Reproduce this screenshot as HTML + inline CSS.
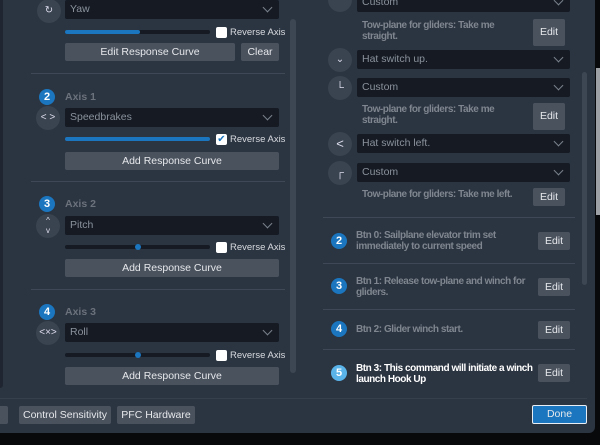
<!DOCTYPE html>
<html><head><meta charset="utf-8"><style>
*{margin:0;padding:0;box-sizing:border-box}
body{width:600px;height:445px;background:#07090b;overflow:hidden;position:relative;font-family:"Liberation Sans",sans-serif}
.a{position:absolute}
.panel{left:0;top:0;width:595px;height:433px;background:#2b3441;border-radius:0 0 6px 0}
.dd{position:absolute;background:#151a23;border-radius:2px;color:#8b929b;font-size:10.5px;line-height:19px;padding-left:5px;height:19px}
.dd:after{content:"";position:absolute;right:8px;top:4px;width:6px;height:6px;border-right:1px solid #7a818a;border-bottom:1px solid #7a818a;transform:rotate(45deg)}
.btn{position:absolute;background:#4a525e;border-radius:2px;color:#e6e8eb;font-size:10.5px;text-align:center;line-height:18px;height:18px}
.ic{position:absolute;width:24px;height:24px;border-radius:50%;background:#3a4350;color:#dde;font-size:10px;text-align:center;line-height:24px}
.bd{position:absolute;width:16px;height:16px;border-radius:50%;background:#1b76bf;color:#fff;font-size:11px;font-weight:bold;text-align:center;line-height:16px}
.lbl{position:absolute;color:#6b727c;font-size:10.5px;font-weight:bold}
.trk{position:absolute;height:4px;background:#151a23;border-radius:2px}
.cb{position:absolute;width:11px;height:11px;background:#fff;border-radius:2px}
.ra{position:absolute;color:#d8dbe0;font-size:9.5px}
.hr{position:absolute;height:1px;background:#3e4856}
.tx{position:absolute;color:#7f868f;font-size:10px;font-weight:bold;line-height:11px;letter-spacing:-0.45px}
</style></head><body>
<div class="a panel"></div>
<div class="a" style="left:596px;top:68px;width:4px;height:147px;background:#9da1a6"></div>
<div class="a" style="left:0;top:0;width:3px;height:388px;background:#1f2631;border-radius:0 0 3px 0"></div>
<div class="a" style="left:290px;top:19px;width:6px;height:354px;background:#3d4653;border-radius:3px"></div>

<!-- Yaw -->
<div class="ic" style="left:37px;top:-1px">↻</div>
<div class="dd" style="left:65px;top:0;width:214px">Yaw</div>
<div class="trk" style="left:65px;top:30px;width:145px"></div>
<div class="a" style="left:65px;top:30px;width:75px;height:4px;background:#1b76bf;border-radius:2px"></div>
<div class="cb" style="left:216px;top:27px"></div><div class="ra" style="left:230px;top:27px">Reverse Axis</div>
<div class="btn" style="left:65px;top:43px;width:170px">Edit Response Curve</div>
<div class="btn" style="left:241px;top:43px;width:38px">Clear</div>
<div class="hr" style="left:31px;top:73px;width:254px"></div>

<!-- Axis1 -->
<div class="bd" style="left:39px;top:89px">2</div><div class="lbl" style="left:65px;top:91px">Axis 1</div>
<div class="ic" style="left:36px;top:106px">&lt; &gt;</div>
<div class="dd" style="left:65px;top:108px;width:214px">Speedbrakes</div>
<div class="a" style="left:65px;top:137px;width:145px;height:4px;background:#1b76bf;border-radius:2px"></div>
<div class="cb" style="left:216px;top:134px;color:#1b76bf;font-size:10px;line-height:11px;text-align:center">✔</div><div class="ra" style="left:230px;top:134px">Reverse Axis</div>
<div class="btn" style="left:65px;top:152px;width:214px">Add Response Curve</div>
<div class="hr" style="left:31px;top:181px;width:254px"></div>

<!-- Axis2 -->
<div class="bd" style="left:39px;top:196px">3</div><div class="lbl" style="left:65px;top:198px">Axis 2</div>
<div class="ic" style="left:36px;top:214px;font-size:8px;line-height:10px;padding-top:2px">^<br>v</div>
<div class="dd" style="left:65px;top:216px;width:214px">Pitch</div>
<div class="trk" style="left:65px;top:245px;width:145px"></div>
<div class="a" style="left:135px;top:244px;width:6px;height:6px;border-radius:50%;background:#1b76bf"></div>
<div class="cb" style="left:216px;top:242px"></div><div class="ra" style="left:230px;top:242px">Reverse Axis</div>
<div class="btn" style="left:65px;top:259px;width:214px">Add Response Curve</div>
<div class="hr" style="left:31px;top:289px;width:254px"></div>

<!-- Axis3 -->
<div class="bd" style="left:39px;top:304px">4</div><div class="lbl" style="left:65px;top:306px">Axis 3</div>
<div class="ic" style="left:36px;top:321px">&lt;×&gt;</div>
<div class="dd" style="left:65px;top:323px;width:214px">Roll</div>
<div class="trk" style="left:65px;top:353px;width:145px"></div>
<div class="a" style="left:135px;top:352px;width:6px;height:6px;border-radius:50%;background:#1b76bf"></div>
<div class="cb" style="left:216px;top:350px"></div><div class="ra" style="left:230px;top:350px">Reverse Axis</div>
<div class="btn" style="left:65px;top:367px;width:214px">Add Response Curve</div>

<!-- Right -->
<div class="a" style="left:582px;top:72px;width:5px;height:213px;background:#3d4653;border-radius:3px"></div>
<div class="ic" style="left:328px;top:-12px;font-size:11px">┘</div>
<div class="dd" style="left:357px;top:-7px;width:213px;padding-top:0">Custom</div>
<div class="tx" style="left:362px;top:20px">Tow-plane for gliders: Take me<br>straight.</div>
<div class="btn" style="left:533px;top:19px;width:32px;height:27px;line-height:27px">Edit</div>
<div class="ic" style="left:328px;top:48px">⌄</div>
<div class="dd" style="left:357px;top:50px;width:213px">Hat switch up.</div>
<div class="ic" style="left:328px;top:76px;font-size:11px">└</div>
<div class="dd" style="left:357px;top:78px;width:213px">Custom</div>
<div class="tx" style="left:362px;top:104px">Tow-plane for gliders: Take me<br>straight.</div>
<div class="btn" style="left:533px;top:103px;width:32px;height:27px;line-height:27px">Edit</div>
<div class="ic" style="left:328px;top:132px;font-size:13px">&lt;</div>
<div class="dd" style="left:357px;top:134px;width:213px">Hat switch left.</div>
<div class="ic" style="left:328px;top:161px;font-size:11px">┌</div>
<div class="dd" style="left:357px;top:163px;width:213px">Custom</div>
<div class="tx" style="left:362px;top:189px">Tow-plane for gliders: Take me left.</div>
<div class="btn" style="left:533px;top:188px;width:32px">Edit</div>
<div class="hr" style="left:323px;top:217px;width:252px"></div>

<div class="bd" style="left:331px;top:233px">2</div>
<div class="tx" style="left:356px;top:230px">Btn 0: Sailplane elevator trim set<br>immediately to current speed</div>
<div class="btn" style="left:538px;top:232px;width:32px">Edit</div>
<div class="hr" style="left:323px;top:263px;width:252px"></div>
<div class="bd" style="left:331px;top:278px">3</div>
<div class="tx" style="left:356px;top:276px">Btn 1: Release tow-plane and winch for<br>gliders.</div>
<div class="btn" style="left:538px;top:278px;width:32px">Edit</div>
<div class="hr" style="left:323px;top:309px;width:252px"></div>
<div class="bd" style="left:331px;top:321px">4</div>
<div class="tx" style="left:356px;top:324px">Btn 2: Glider winch start.</div>
<div class="btn" style="left:538px;top:321px;width:32px">Edit</div>
<div class="hr" style="left:323px;top:349px;width:252px"></div>
<div class="bd" style="left:331px;top:365px;background:#5ab4ea">5</div>
<div class="tx" style="left:356px;top:363px;color:#fff">Btn 3: This command will initiate a winch<br>launch Hook Up</div>
<div class="btn" style="left:538px;top:364px;width:32px">Edit</div>

<!-- bottom -->
<div class="hr" style="left:0;top:398px;width:587px;background:#36404d"></div>
<div class="btn" style="left:-10px;top:406px;width:18px"></div>
<div class="btn" style="left:19px;top:406px;width:92px">Control Sensitivity</div>
<div class="btn" style="left:117px;top:406px;width:78px">PFC Hardware</div>
<div class="btn" style="left:532px;top:405px;width:55px;height:19px;background:#1b76bf;border:1px solid #e8eef4;line-height:17px">Done</div>
</body></html>
